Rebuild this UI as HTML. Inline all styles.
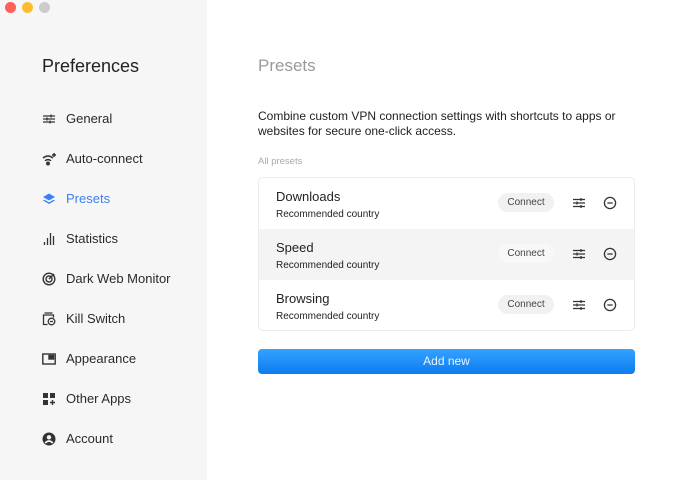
<!DOCTYPE html><html><head><style>
*{margin:0;padding:0;box-sizing:border-box}
body{width:680px;height:480px;overflow:hidden;font-family:"Liberation Sans",sans-serif;background:#fff;position:relative;color:#222}
.side{position:absolute;left:0;top:0;width:207px;height:480px;background:#f6f6f6}
.tl{position:absolute;top:2px;width:11px;height:11px;border-radius:50%}
h1{position:absolute;left:42px;top:56px;font-size:18px;font-weight:normal;color:#222}
.nav{position:absolute;left:42px;font-size:13px;color:#2a2a2a;display:flex;align-items:center;white-space:nowrap}
.nav svg{width:14px;height:14px;margin-right:10px;flex-shrink:0}
.blue{color:#3f7ff5}
h2{position:absolute;left:258px;top:56px;font-size:17px;font-weight:normal;color:#9a9a9a}
.desc{position:absolute;left:258px;top:109px;width:400px;font-size:12px;line-height:15px;color:#222;white-space:nowrap}
.lab{position:absolute;left:258px;top:156px;font-size:9.5px;color:#aaa}
.card{position:absolute;left:258px;top:177px;width:377px;height:154px;border:1px solid #ececec;border-radius:5px;overflow:hidden}
.row{height:51px;position:relative}
.row.g{background:#f4f4f4}
.t{position:absolute;left:17px;top:11px;font-size:13px}
.s{position:absolute;left:17px;top:31px;font-size:10px;color:#222}
.c{position:absolute;left:239px;top:15px;width:56px;height:19px;border-radius:10px;background:#f1f1f1;font-size:10px;color:#444;text-align:center;line-height:19px}
.row.g .c{background:#f8f8f8}
.i1{position:absolute;left:313px;top:18px}
.i2{position:absolute;left:344px;top:18px}
.btn{position:absolute;left:258px;top:349px;width:377px;height:25px;border-radius:4px;background:linear-gradient(#35a2ff,#0c7cf0);color:#eaf4ff;font-size:12px;text-align:center;line-height:25px}
</style></head><body>
<div class="side">
<div class="tl" style="left:5px;background:#fe5f57"></div>
<div class="tl" style="left:22px;background:#febc2e"></div>
<div class="tl" style="left:39px;background:#ccc"></div>
<h1>Preferences</h1>
<div class="nav" style="top:111px"><svg viewBox="0 0 14 14" stroke="#333" stroke-width="1.3"><path d="M1 4h12M1 7h12M1 10h12"/><path d="M9 2.5v3M5 5.5v3M8 8.5v3"/></svg>General</div>
<div class="nav" style="top:151px"><svg viewBox="0 0 14 14" stroke="#333" stroke-width="1.5" fill="none"><path d="M1 6q5-4 10 0M3 8.8q3-2.5 6 0"/><circle cx="6" cy="11.5" r="1.2" fill="#333"/><path d="M12 1v4M10 3h4"/></svg>Auto-connect</div>
<div class="nav blue" style="top:191px"><svg viewBox="0 0 14 14" fill="#3f7ff5"><path d="M7 1.5l6 3.5-6 3.5-6-3.5z"/><path d="M1 8.5l6 3.5 6-3.5-1.4-.8L7 10.4 2.4 7.7z"/></svg>Presets</div>
<div class="nav" style="top:231px"><svg viewBox="0 0 14 14" stroke="#333" stroke-width="1.3"><path d="M2.5 13V10M5.5 13V6M8.5 13V1M11.5 13V4"/></svg>Statistics</div>
<div class="nav" style="top:271px"><svg viewBox="0 0 14 14" stroke="#333" stroke-width="1.4" fill="none"><circle cx="7" cy="7" r="5.8"/><circle cx="7" cy="7" r="3"/><path d="M7 7l5-5"/></svg>Dark Web Monitor</div>
<div class="nav" style="top:311px"><svg viewBox="0 0 14 14" stroke="#333" stroke-width="1.3" fill="none"><path d="M5.5 12.5H1.5V3h10v2.5M2.5 1h8"/><circle cx="9.5" cy="9.5" r="3.3"/><path d="M8 9.5h3"/></svg>Kill Switch</div>
<div class="nav" style="top:351px"><svg viewBox="0 0 14 14" stroke="#333" stroke-width="1.4" fill="none"><rect x="0.8" y="2" width="12.4" height="10"/><rect x="7" y="3.5" width="4.5" height="3.5" fill="#333"/></svg>Appearance</div>
<div class="nav" style="top:391px"><svg viewBox="0 0 14 14" fill="#333"><rect x="1" y="1" width="5" height="5"/><rect x="8" y="1" width="5" height="5"/><rect x="1" y="8" width="5" height="5"/><path d="M9.8 8h1.4v5H9.8zM8 9.8h5v1.4H8z"/></svg>Other Apps</div>
<div class="nav" style="top:431px"><svg viewBox="0 0 14 14"><circle cx="7" cy="7" r="6.5" fill="#333"/><circle cx="7" cy="5.3" r="2.2" fill="#f6f6f6"/><path d="M3.3 11q3.7-4 7.4 0" stroke="#f6f6f6" stroke-width="1.8" fill="none"/></svg>Account</div>
</div>
<h2>Presets</h2>
<div class="desc">Combine custom VPN connection settings with shortcuts to apps or<br>websites for secure one-click access.</div>
<div class="lab">All presets</div>
<div class="card">
<div class="row"><div class="t">Downloads</div><div class="s">Recommended country</div><div class="c">Connect</div>
<svg class="i1" width="14" height="14" viewBox="0 0 14 14" stroke="#333" stroke-width="1.3"><path d="M1 3.5h12M1 7h12M1 10.5h12"/><path d="M9 2v3M5 5.5v3M9 9v3"/></svg>
<svg class="i2" width="14" height="14" viewBox="0 0 14 14" stroke="#333" stroke-width="1.3" fill="none"><circle cx="7" cy="7" r="5.6"/><path d="M4.3 7h5.4"/></svg></div>
<div class="row g"><div class="t">Speed</div><div class="s">Recommended country</div><div class="c">Connect</div>
<svg class="i1" width="14" height="14" viewBox="0 0 14 14" stroke="#333" stroke-width="1.3"><path d="M1 3.5h12M1 7h12M1 10.5h12"/><path d="M9 2v3M5 5.5v3M9 9v3"/></svg>
<svg class="i2" width="14" height="14" viewBox="0 0 14 14" stroke="#333" stroke-width="1.3" fill="none"><circle cx="7" cy="7" r="5.6"/><path d="M4.3 7h5.4"/></svg></div>
<div class="row"><div class="t">Browsing</div><div class="s">Recommended country</div><div class="c">Connect</div>
<svg class="i1" width="14" height="14" viewBox="0 0 14 14" stroke="#333" stroke-width="1.3"><path d="M1 3.5h12M1 7h12M1 10.5h12"/><path d="M9 2v3M5 5.5v3M9 9v3"/></svg>
<svg class="i2" width="14" height="14" viewBox="0 0 14 14" stroke="#333" stroke-width="1.3" fill="none"><circle cx="7" cy="7" r="5.6"/><path d="M4.3 7h5.4"/></svg></div>
</div>
<div class="btn">Add new</div>
</body></html>
